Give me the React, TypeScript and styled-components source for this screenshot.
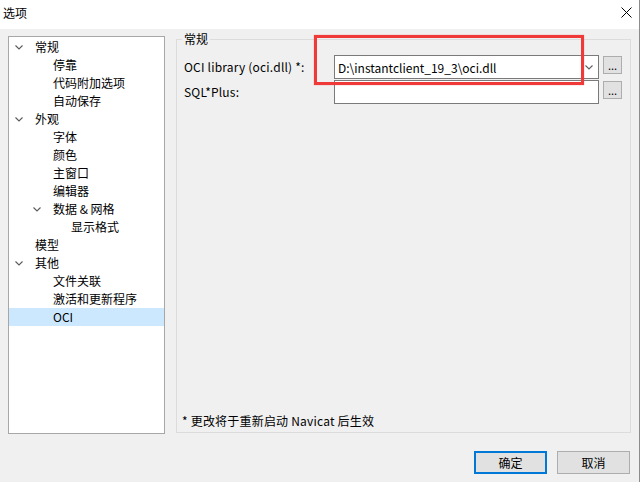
import React from 'react';
import styled, { createGlobalStyle } from 'styled-components';

const Global = createGlobalStyle`
  html, body { margin: 0; padding: 0; background: #ffffff; }
  body {
    font-family: "Noto Sans CJK SC", "Noto Sans", sans-serif;
    font-size: 12px;
    color: #000000;
  }
  * { box-sizing: border-box; }
`;

const Screen = styled.div`
  width: 643px;
  height: 482px;
  display: flex;
  background: #ffffff;
  overflow: hidden;
`;

const Window = styled.div`
  width: 640px;
  height: 482px;
  border-right: 1px solid #8c8c8c;
  display: flex;
  flex-direction: column;
  background: #f0f0f0;
`;

const TitleBar = styled.div`
  height: 29px;
  background: #ffffff;
  display: flex;
  align-items: center;
  justify-content: space-between;
  padding: 0 7px 0 3px;
`;

const Title = styled.span`
  font-size: 12px;
  line-height: 14px;
  margin-top: -4px;
`;

const CloseIcon = styled.svg`
  width: 11px;
  height: 11px;
  margin-top: -5px;
`;

const Body = styled.div`
  flex: 1;
  display: flex;
  flex-direction: column;
  padding: 3px 8px 0 8px;
`;

const MainRow = styled.div`
  display: flex;
  align-items: flex-start;
  height: 402px;
`;

const Tree = styled.div`
  width: 157px;
  height: 398px;
  margin-top: 4px;
  background: #ffffff;
  border: 1px solid #a7a7a7;
  padding-top: 1px;
  display: flex;
  flex-direction: column;
`;

const TreeRow = styled.div<{ $level: number; $selected?: boolean }>`
  height: 18px;
  display: flex;
  align-items: center;
  padding-left: ${(p) => p.$level * 18}px;
  background: ${(p) => (p.$selected ? '#cce8ff' : 'transparent')};
  line-height: 18px;
  white-space: nowrap;
`;

const Toggle = styled.span`
  width: 26px;
  height: 18px;
  flex: none;
  display: flex;
  align-items: center;
  padding-left: 6px;
`;

const Group = styled.fieldset`
  flex: 1;
  margin: 0 0 0 11px;
  height: 401px;
  border: 1px solid #dcdcdc;
  padding: 0;
  display: flex;
  flex-direction: column;
  min-width: 0;
`;

const Legend = styled.legend`
  margin-left: 5px;
  padding: 0 2px;
  font-size: 12px;
  line-height: 14px;
`;

const GroupInner = styled.div`
  flex: 1;
  display: flex;
  flex-direction: column;
  padding: 9px 8px 4px 7px;
`;

const FieldRow = styled.div<{ $gap?: number }>`
  display: flex;
  align-items: flex-start;
  height: 24px;
  margin-top: ${(p) => p.$gap ?? 0}px;
`;

const Label = styled.label`
  width: 150px;
  flex: none;
  height: 24px;
  line-height: 24px;
  white-space: nowrap;
  letter-spacing: 0.2px;
`;

const Field = styled.div`
  width: 265px;
  height: 24px;
  background: #ffffff;
  border: 1px solid #7a7a7a;
  display: flex;
  align-items: center;
  padding: 0 5px 0 3px;
  justify-content: space-between;
  white-space: nowrap;
`;

const DotsButton = styled.button`
  width: 19px;
  height: 18px;
  margin: 1px 0 0 4px;
  padding: 0;
  background: #e1e1e1;
  border: 1px solid #adadad;
  font-family: inherit;
  font-size: 11px;
  line-height: 12px;
  color: #000;
  display: flex;
  align-items: center;
  justify-content: center;
`;

const Note = styled.div`
  margin-top: auto;
  margin-left: -2px;
  line-height: 14px;
  white-space: nowrap;
  letter-spacing: 0.2px;
`;

const ButtonRow = styled.div`
  display: flex;
  justify-content: flex-end;
  gap: 10px;
  margin-top: 17px;
  padding-right: 1px;
`;

const DialogButton = styled.button<{ $primary?: boolean }>`
  width: 73px;
  height: 23px;
  padding: 0;
  background: #e1e1e1;
  border: ${(p) => (p.$primary ? '2px solid #0078d7' : '1px solid #adadad')};
  font-family: inherit;
  font-size: 12px;
  color: #000;
`;

const Highlight = styled.div`
  position: absolute;
  left: 314px;
  top: 35px;
  width: 270px;
  height: 50px;
  border: 3px solid #f03a3a;
  box-shadow: 0 0 1px rgba(240, 58, 58, 0.6);
  pointer-events: none;
`;

const Chevron = ({ color = '#5a5a5a' }: { color?: string }) => (
  <svg width="8" height="5" viewBox="0 0 8 5">
    <polyline points="0.5,0.5 4,4 7.5,0.5" fill="none" stroke={color} strokeWidth="1.1" />
  </svg>
);

type Item = { label: string; level: number; expanded?: boolean; selected?: boolean };

const items: Item[] = [
  { label: '常规', level: 0, expanded: true },
  { label: '停靠', level: 1 },
  { label: '代码附加选项', level: 1 },
  { label: '自动保存', level: 1 },
  { label: '外观', level: 0, expanded: true },
  { label: '字体', level: 1 },
  { label: '颜色', level: 1 },
  { label: '主窗口', level: 1 },
  { label: '编辑器', level: 1 },
  { label: '数据 & 网格', level: 1, expanded: true },
  { label: '显示格式', level: 2 },
  { label: '模型', level: 0 },
  { label: '其他', level: 0, expanded: true },
  { label: '文件关联', level: 1 },
  { label: '激活和更新程序', level: 1 },
  { label: 'OCI', level: 1, selected: true },
];

export default function App() {
  return (
    <>
      <Global />
      <Screen>
        <Window>
          <TitleBar>
            <Title>选项</Title>
            <CloseIcon viewBox="0 0 11 11">
              <path d="M0.5 0.5 L10.5 10.5 M10.5 0.5 L0.5 10.5" stroke="#000" strokeWidth="1" />
            </CloseIcon>
          </TitleBar>
          <Body>
            <MainRow>
              <Tree>
                {items.map((it) => (
                  <TreeRow key={it.label} $level={it.level} $selected={it.selected}>
                    <Toggle>{it.expanded ? <Chevron /> : null}</Toggle>
                    {it.label}
                  </TreeRow>
                ))}
              </Tree>
              <Group>
                <Legend>常规</Legend>
                <GroupInner>
                  <FieldRow>
                    <Label>OCI library (oci.dll) *:</Label>
                    <Field>
                      <span>D:\instantclient_19_3\oci.dll</span>
                      <Chevron color="#606060" />
                    </Field>
                    <DotsButton>...</DotsButton>
                  </FieldRow>
                  <FieldRow $gap={1}>
                    <Label>SQL*Plus:</Label>
                    <Field />
                    <DotsButton>...</DotsButton>
                  </FieldRow>
                  <Note>* 更改将于重新启动 Navicat 后生效</Note>
                </GroupInner>
              </Group>
            </MainRow>
            <ButtonRow>
              <DialogButton $primary>确定</DialogButton>
              <DialogButton>取消</DialogButton>
            </ButtonRow>
          </Body>
        </Window>
        <Highlight />
      </Screen>
    </>
  );
}
